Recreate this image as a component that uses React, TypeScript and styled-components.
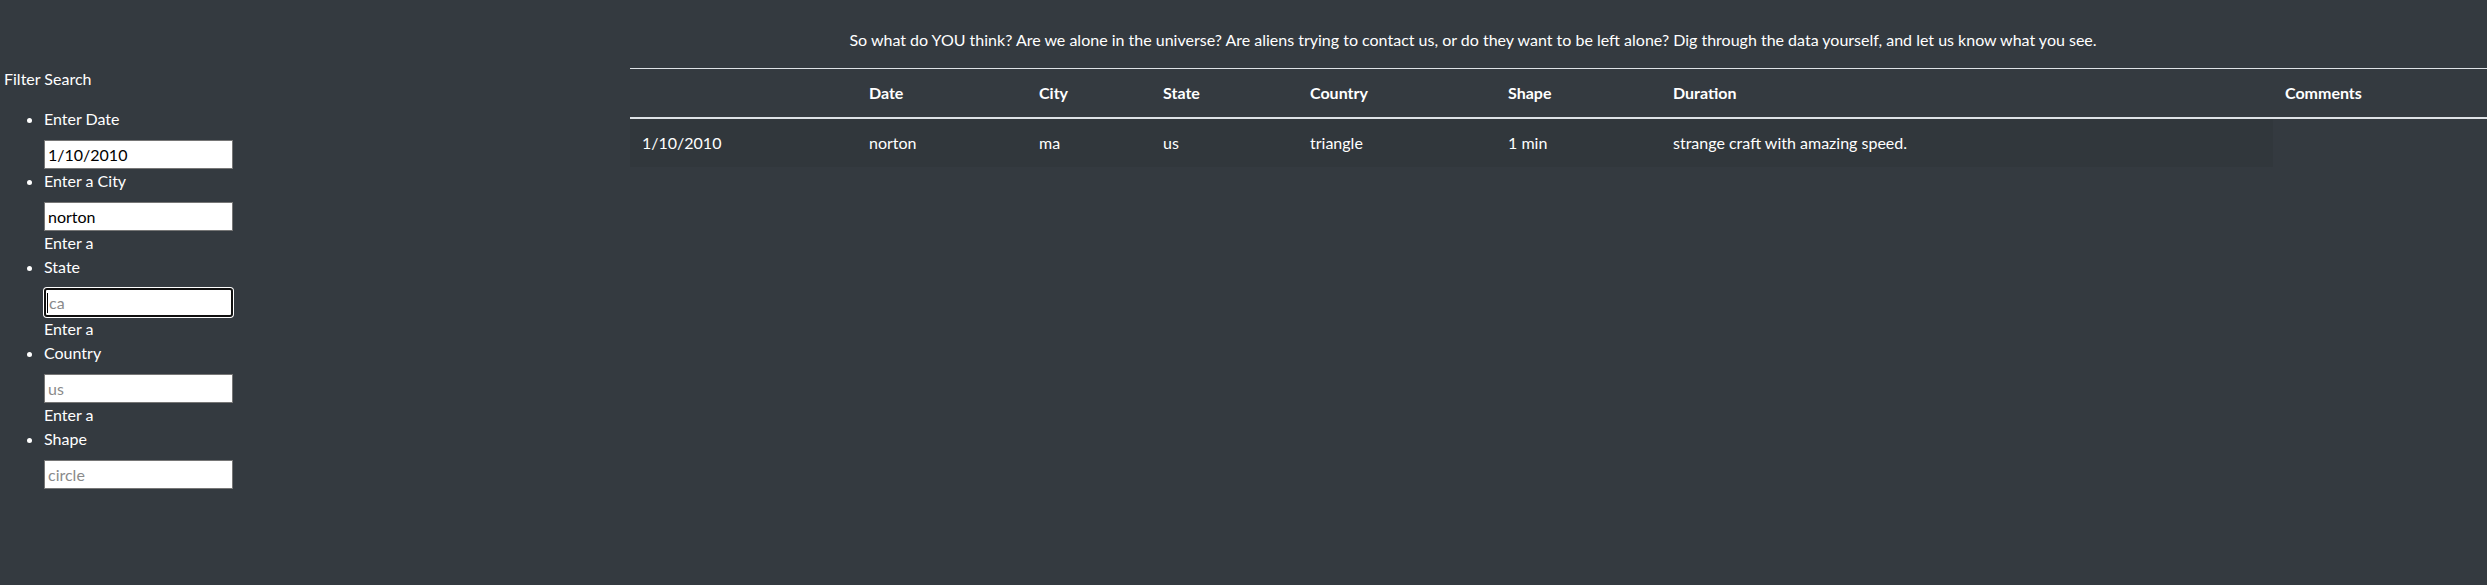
import React from 'react';
import styled, { createGlobalStyle } from 'styled-components';

const GlobalStyle = createGlobalStyle`
  html, body {
    margin: 0;
    padding: 0;
    background: #343a40;
    color: #fff;
    font-family: Lato, "Noto Sans", sans-serif;
    font-size: 16px;
    line-height: 1.5;
  }
`;

const Page = styled.div`
  display: flex;
  width: 100%;
  min-height: 585px;
  overflow: hidden;
  background: #343a40;
`;

const Sidebar = styled.aside`
  flex: 0 0 630px;
  box-sizing: border-box;
  padding: 67px 0 0 4px;
`;

const SidebarTitle = styled.div`
  line-height: 24px;
`;

const FilterList = styled.ul`
  margin: 16px 0 0;
  padding-left: 40px;
`;

const FilterItem = styled.li<{ $bullet?: boolean }>`
  list-style: ${(props) => (props.$bullet ? 'disc' : 'none')};
  line-height: 24px;
`;

const FilterInput = styled.input<{ $focused?: boolean }>`
  display: block;
  box-sizing: border-box;
  width: 189px;
  height: 29px;
  margin-top: 9px;
  padding: 0 3px;
  font-family: inherit;
  font-size: 16px;
  color: #000;
  background: #fff;
  border: 1px solid #767676;
  border-radius: 0;
  outline: none;

  &::placeholder {
    color: #8a8a8a;
  }

  ${(props) =>
    props.$focused &&
    `
    border: 2px solid #101010;
    border-radius: 3px;
    box-shadow: 0 0 0 1px #fff;
    padding-left: 3px;
    background: linear-gradient(#000, #000) no-repeat 1px center / 1px 20px, #fff;
  `}
`;

const Content = styled.main`
  flex: 0 0 1686px;
  min-width: 0;
  padding-top: 28px;
`;

const Intro = styled.p`
  margin: 0 0 16px;
  text-align: center;
  line-height: 24px;
`;

const Table = styled.table`
  width: 1857px;
  table-layout: fixed;
  border-collapse: collapse;
  color: #fff;
`;

const HeadCell = styled.th<{ $width: number }>`
  box-sizing: border-box;
  width: ${(props) => props.$width}px;
  padding: 12px;
  text-align: left;
  vertical-align: bottom;
  font-weight: 700;
  line-height: 24px;
  white-space: nowrap;
  border-top: 1px solid #dee2e6;
  border-bottom: 2px solid #dee2e6;
`;

const StripedRow = styled.tr`
  td {
    background: rgba(0, 0, 0, 0.05);
  }
`;

const Cell = styled.td`
  box-sizing: border-box;
  padding: 12px;
  line-height: 24px;
  vertical-align: top;
`;

const columns: [string, number][] = [
  ['', 227],
  ['Date', 170],
  ['City', 124],
  ['State', 147],
  ['Country', 198],
  ['Shape', 165],
  ['Duration', 612],
  ['Comments', 214],
];

const sightings = [
  ['1/10/2010', 'norton', 'ma', 'us', 'triangle', '1 min', 'strange craft with amazing speed.'],
];

function App() {
  return (
    <>
      <GlobalStyle />
      <Page>
        <Sidebar>
          <SidebarTitle>Filter Search</SidebarTitle>
          <FilterList>
            <FilterItem $bullet>
              Enter Date
              <FilterInput defaultValue="1/10/2010" />
            </FilterItem>
            <FilterItem $bullet>
              Enter a City
              <FilterInput defaultValue="norton" />
            </FilterItem>
            <FilterItem>Enter a</FilterItem>
            <FilterItem $bullet>
              State
              <FilterInput placeholder="ca" $focused />
            </FilterItem>
            <FilterItem>Enter a</FilterItem>
            <FilterItem $bullet>
              Country
              <FilterInput placeholder="us" />
            </FilterItem>
            <FilterItem>Enter a</FilterItem>
            <FilterItem $bullet>
              Shape
              <FilterInput placeholder="circle" />
            </FilterItem>
          </FilterList>
        </Sidebar>
        <Content>
          <Intro>
            So what do YOU think? Are we alone in the universe? Are aliens trying to contact us, or do
            they want to be left alone? Dig through the data yourself, and let us know what you see.
          </Intro>
          <Table>
            <thead>
              <tr>
                {columns.map(([name, width], i) => (
                  <HeadCell key={i} $width={width}>
                    {name}
                  </HeadCell>
                ))}
              </tr>
            </thead>
            <tbody>
              {sightings.map((row, i) => (
                <StripedRow key={i}>
                  {row.map((value, j) => (
                    <Cell key={j}>{value}</Cell>
                  ))}
                </StripedRow>
              ))}
            </tbody>
          </Table>
        </Content>
      </Page>
    </>
  );
}

export default App;
